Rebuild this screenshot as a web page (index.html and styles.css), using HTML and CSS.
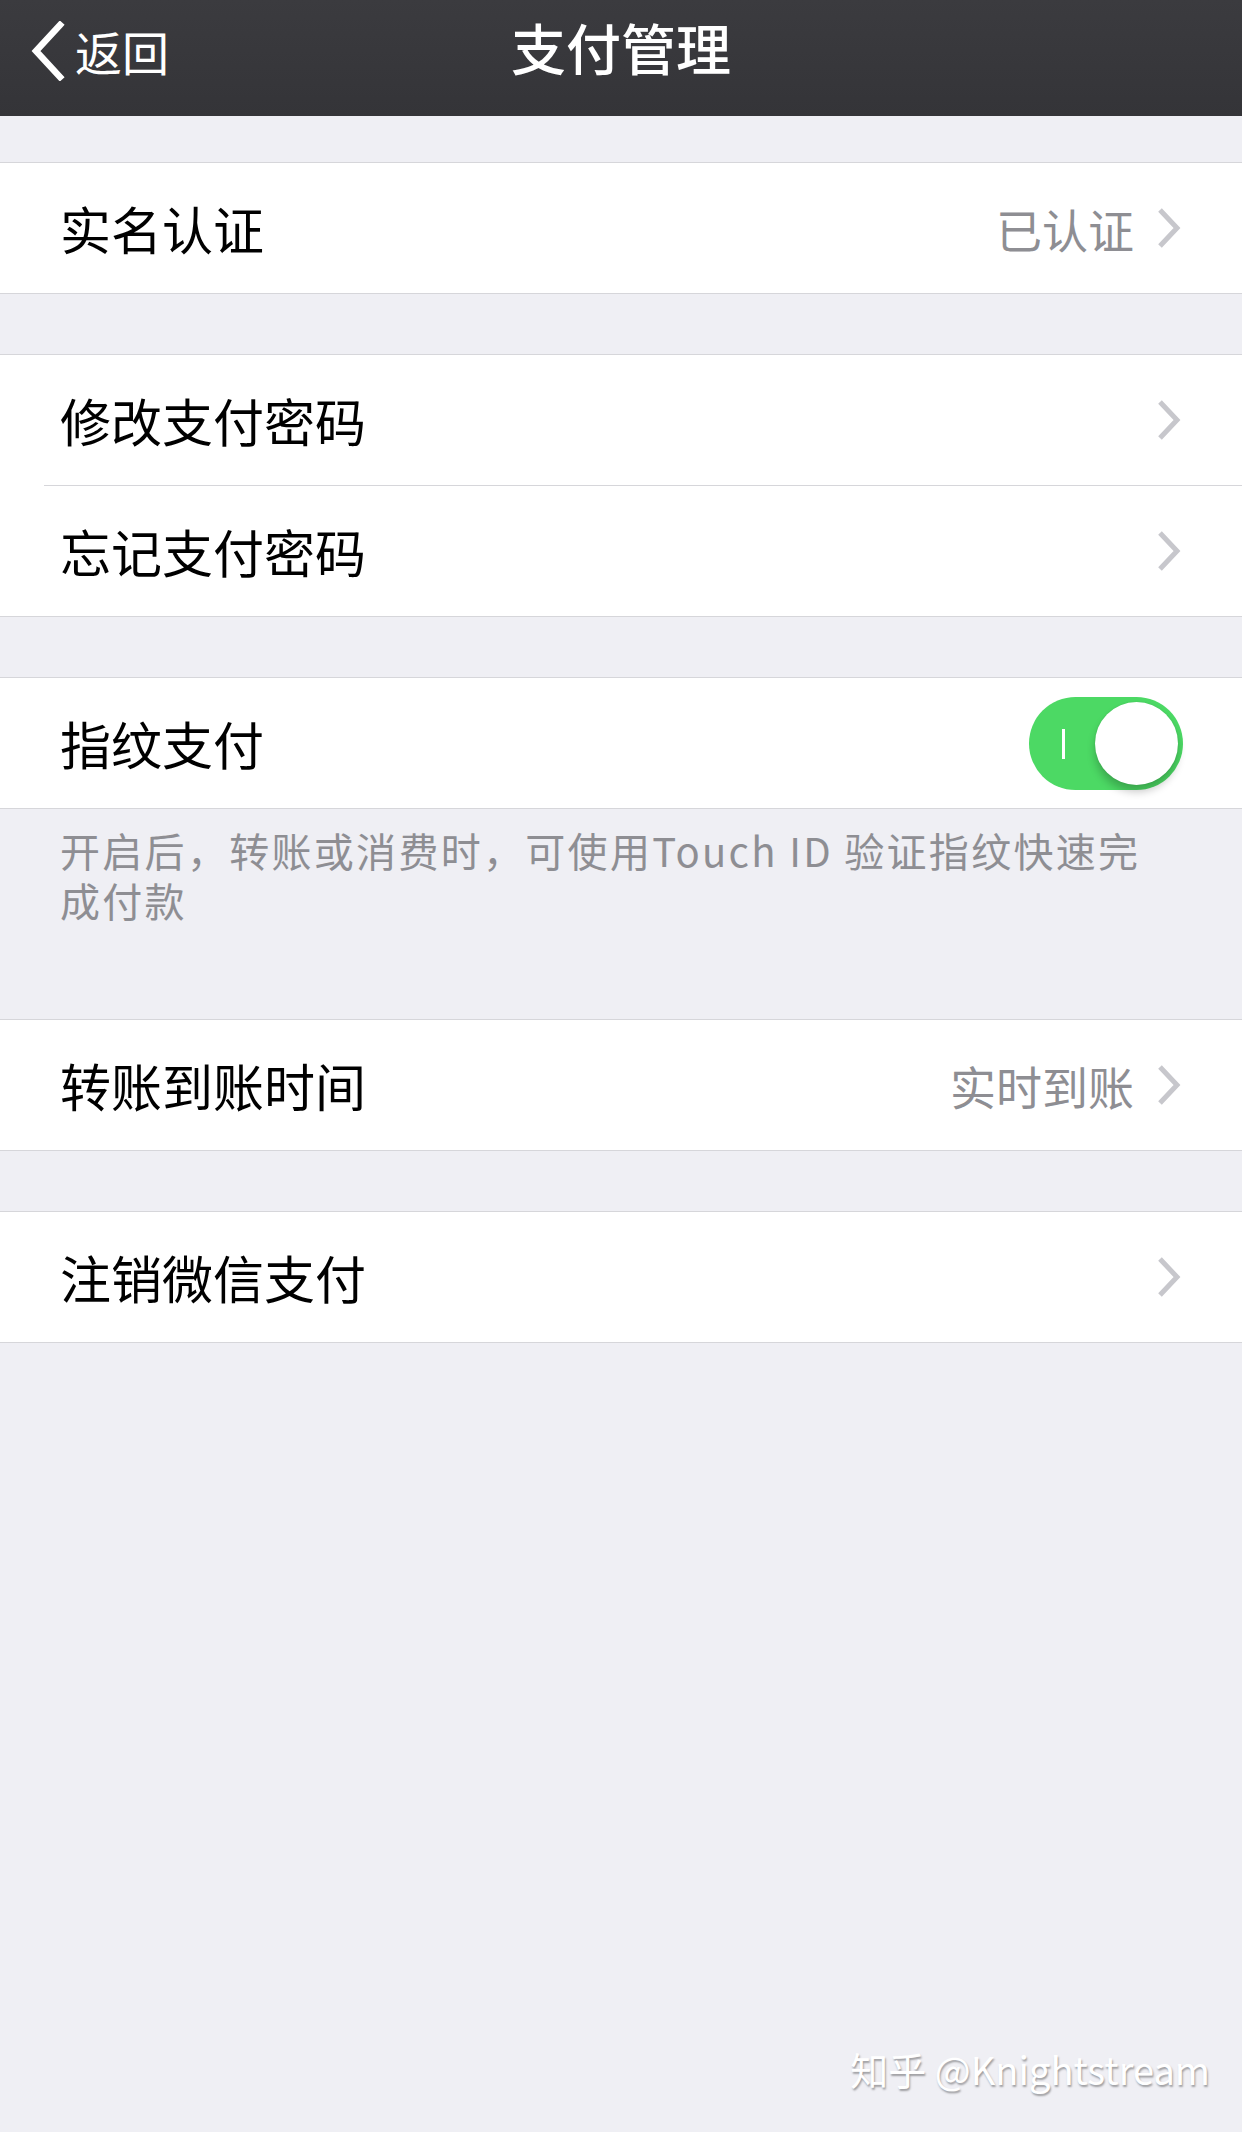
FILE: index.html
```html
<!DOCTYPE html>
<html>
<head>
	<title>支付管理</title>
	<link rel="stylesheet" href="styles.css">
</head>
<body>
	<div class="page">
		<div class="navbar">
			<div class="back">
				<svg class="back-arrow" width="36" height="60" viewBox="0 0 36 60">
					<path d="M31 4 L7 30 L31 56" fill="none" stroke="#fff" stroke-width="6.5" stroke-linecap="square"/>
				</svg>
				<span>返回</span>
			</div>
			<div class="title">支付管理</div>
		</div>

		<div class="group first">
			<div class="row">
				<span class="label">实名认证</span>
				<span class="value">已认证</span>
				<svg class="arrow" width="26" height="42" viewBox="0 0 26 42"><path d="M4 3 L21 21 L4 39" fill="none" stroke="#c7c7cc" stroke-width="5"/></svg>
			</div>
		</div>

		<div class="group">
			<div class="row">
				<span class="label">修改支付密码</span>
				<svg class="arrow" width="26" height="42" viewBox="0 0 26 42"><path d="M4 3 L21 21 L4 39" fill="none" stroke="#c7c7cc" stroke-width="5"/></svg>
			</div>
			<div class="sep"></div>
			<div class="row">
				<span class="label">忘记支付密码</span>
				<svg class="arrow" width="26" height="42" viewBox="0 0 26 42"><path d="M4 3 L21 21 L4 39" fill="none" stroke="#c7c7cc" stroke-width="5"/></svg>
			</div>
		</div>

		<div class="group">
			<div class="row">
				<span class="label">指纹支付</span>
				<div class="switch">
					<span class="on-mark"></span>
					<span class="knob"></span>
				</div>
			</div>
		</div>
		<div class="footer">开启后，转账或消费时，可使用Touch ID 验证指纹快速完<br>成付款</div>

		<div class="group tight">
			<div class="row">
				<span class="label">转账到账时间</span>
				<span class="value">实时到账</span>
				<svg class="arrow" width="26" height="42" viewBox="0 0 26 42"><path d="M4 3 L21 21 L4 39" fill="none" stroke="#c7c7cc" stroke-width="5"/></svg>
			</div>
		</div>

		<div class="group">
			<div class="row">
				<span class="label">注销微信支付</span>
				<svg class="arrow" width="26" height="42" viewBox="0 0 26 42"><path d="M4 3 L21 21 L4 39" fill="none" stroke="#c7c7cc" stroke-width="5"/></svg>
			</div>
		</div>

		<div class="watermark">知乎 @Knightstream</div>
	</div>
</body>
</html>
```

FILE: styles.css
```css
*{
	margin: 0px;
	padding: 0px;
	box-sizing: border-box;
}
body{
	background-color: #efeff4;
	font-family: "Noto Sans CJK SC", "Noto Sans", sans-serif;
}
.page{
	display: flex;
	flex-direction: column;
	min-height: 2132px;
}
.navbar{
	height: 116px;
	padding-bottom: 24px;
	background: linear-gradient(#3b3b3f, #343438);
	display: flex;
	align-items: center;
	justify-content: center;
	position: relative;
	color: #fff;
}
.back{
	position: absolute;
	left: 29px;
	top: 20px;
	display: flex;
	align-items: center;
	gap: 10px;
	font-size: 47px;
	line-height: 62px;
}
.back-arrow{
	display: block;
}
.title{
	font-size: 55px;
	font-weight: 500;
	line-height: 70px;
}
.group{
	margin-top: 60px;
	background-color: #fff;
	border-top: 1px solid #d6d6da;
	border-bottom: 1px solid #d6d6da;
}
.group.first{
	margin-top: 46px;
}
.group.tight{
	margin-top: 0px;
}
.row{
	height: 130px;
	display: flex;
	align-items: center;
	padding: 0px 60px 0px 60px;
}
.label{
	flex: 1;
	font-size: 51px;
	color: #000;
}
.value{
	font-size: 46px;
	color: #8e8e93;
	margin-right: 22px;
}
.arrow{
	display: block;
}
.sep{
	height: 1px;
	margin-left: 44px;
	background-color: #d6d6da;
}
.switch{
	width: 154px;
	height: 93px;
	border-radius: 47px;
	background-color: #4cd964;
	position: relative;
	margin-right: -1px;
}
.on-mark{
	position: absolute;
	left: 33px;
	top: 32px;
	width: 3px;
	height: 30px;
	background-color: #fff;
}
.knob{
	position: absolute;
	right: 5px;
	top: 5px;
	width: 83px;
	height: 83px;
	border-radius: 50%;
	background-color: #fff;
	box-shadow: 0px 7px 9px rgba(0, 0, 0, 0.22), 0px 0px 2px rgba(0, 0, 0, 0.1);
}
.footer{
	height: 210px;
	padding: 16px 20px 0px 60px;
	font-size: 40px;
	line-height: 50px;
	letter-spacing: 2.3px;
	color: #8e8e93;
}
.watermark{
	margin-top: auto;
	align-self: flex-end;
	padding: 0px 32px 36px 0px;
	font-size: 38px;
	color: #fff;
	text-shadow: 1px 2px 2px rgba(0, 0, 0, 0.35);
}
```
